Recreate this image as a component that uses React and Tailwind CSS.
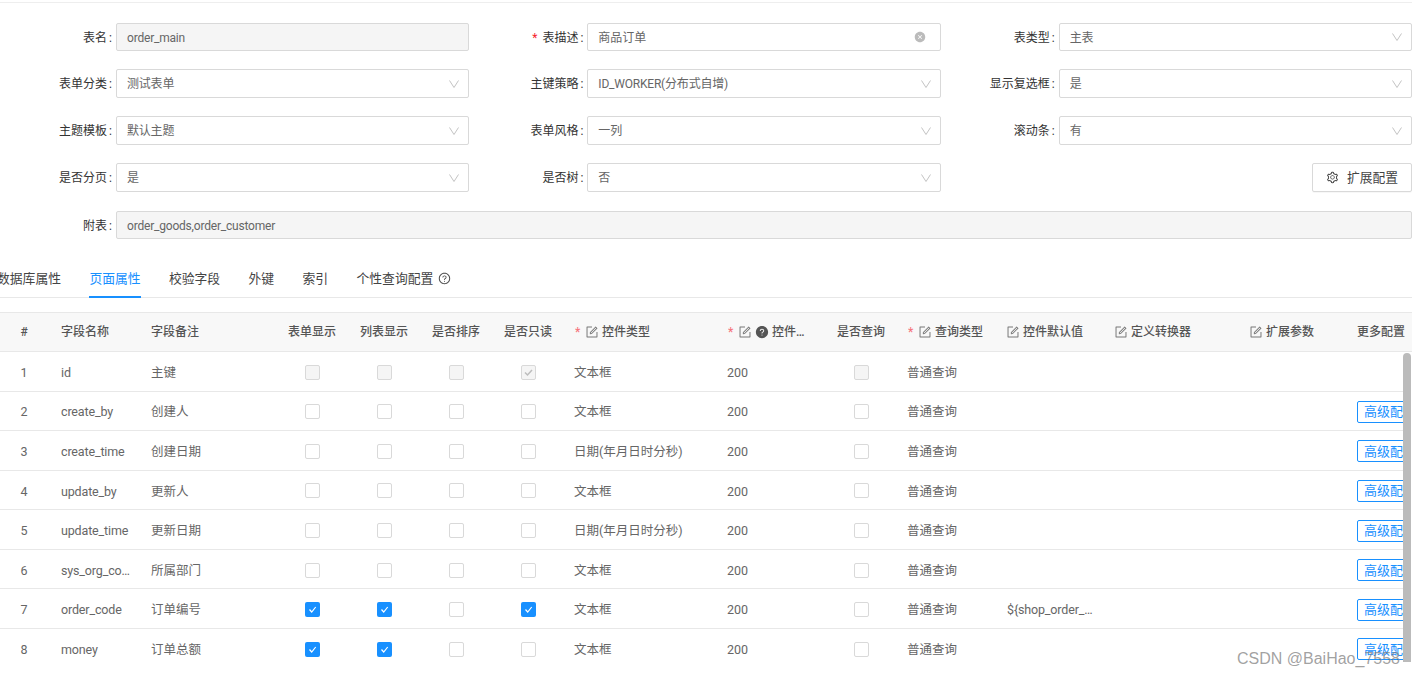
import React from "react";
import { AiOutlineForm, AiFillQuestionCircle, AiOutlineQuestionCircle, AiOutlineSetting, AiFillCloseCircle } from "react-icons/ai";

const Chevron = () => (
  <svg width="12" height="10" viewBox="0 0 12 10" fill="none" stroke="#c4c4c4" strokeWidth="1" className="shrink-0">
    <path d="M1.5 1.5 L6 8.5 L10.5 1.5" />
  </svg>
);

const Field = ({ label, req, h = "h-[29px]", children }) => (
  <div className="flex items-center">
    <div className="w-[116px] shrink-0 pr-[4px] pt-[1px] text-right text-xs text-[#333]">
      {req && <span className="mr-[5px] text-[#f5222d]">*</span>}
      {label}
      <span className="ml-[2px]">:</span>
    </div>
    <div className={`flex-1 ${h}`}>{children}</div>
  </div>
);

const Select = ({ value }) => (
  <div className="flex h-full items-center justify-between rounded-[2px] border border-[#d9d9d9] bg-white pl-[10px] pr-[8px] text-xs text-[#666]">
    <span className="pt-[1px] tracking-[-0.2px]">{value}</span>
    <Chevron />
  </div>
);

const Disabled = ({ value }) => (
  <div className="flex h-full items-center rounded-[2px] border border-[#d9d9d9] bg-[#f5f5f5] pl-[10px] text-xs text-[#666]">
    <span className="pt-[1px] tracking-[-0.2px]">{value}</span>
  </div>
);

const grid =
  "grid grid-cols-[48px_90px_138px_72px_72px_72px_72px_153px_108px_72px_100px_108px_135px_107px_minmax(0,1fr)] items-center";

const Check = ({ state }) => {
  if (state === "on")
    return (
      <span className="flex h-[15px] w-[15px] items-center justify-center rounded-[2px] bg-[#1890ff]">
        <svg width="11" height="11" viewBox="0 0 11 11" fill="none" stroke="#fff" strokeWidth="1.2"><path d="M2.5 5.5 L4.7 8 L8.7 3" /></svg>
      </span>
    );
  if (state === "dis")
    return <span className="block h-[15px] w-[15px] rounded-[2px] border border-[#d9d9d9] bg-[#f5f5f5]" />;
  if (state === "dison")
    return (
      <span className="flex h-[15px] w-[15px] items-center justify-center rounded-[2px] border border-[#d9d9d9] bg-[#f5f5f5]">
        <svg width="11" height="11" viewBox="0 0 11 11" fill="none" stroke="#bdbdbd" strokeWidth="1.5"><path d="M2 5.5 L4.5 8 L9 3" /></svg>
      </span>
    );
  return <span className="block h-[15px] w-[15px] rounded-[2px] border border-[#d9d9d9] bg-white" />;
};

const CheckCell = ({ state }) => (
  <div className="flex justify-center"><Check state={state} /></div>
);

const Star = () => <span className="w-[7px] shrink-0 text-xs leading-none text-[#f5222d] opacity-60">*</span>;
const Edit = () => <AiOutlineForm className="shrink-0 text-[14px] text-[#777]" />;

const rows = [
  { n: 1, name: "id", note: "主键", c: ["dis", "dis", "dis", "dison"], type: "文本框", q: "dis", noBtn: true },
  { n: 2, name: "create_by", note: "创建人", c: ["", "", "", ""], type: "文本框" },
  { n: 3, name: "create_time", note: "创建日期", c: ["", "", "", ""], type: "日期(年月日时分秒)" },
  { n: 4, name: "update_by", note: "更新人", c: ["", "", "", ""], type: "文本框" },
  { n: 5, name: "update_time", note: "更新日期", c: ["", "", "", ""], type: "日期(年月日时分秒)" },
  { n: 6, name: "sys_org_code", note: "所属部门", c: ["", "", "", ""], type: "文本框" },
  { n: 7, name: "order_code", note: "订单编号", c: ["on", "on", "", "on"], type: "文本框", def: "${shop_order_num}" },
  { n: 8, name: "money", note: "订单总额", c: ["on", "on", "", ""], type: "文本框" },
];

const tabs = ["数据库属性", "页面属性", "校验字段", "外键", "索引"];

export default function App() {
  return (
    <div className="relative h-[676px] w-[1417px] overflow-hidden bg-white font-['Roboto','Noto_Sans_CJK_SC',sans-serif]">
      <div className="w-[1412px] pt-[2px]">
        <div className="border-t border-[#eeeeee] pt-[20px]">
          {/* form */}
          <div className="grid grid-cols-3 gap-x-[2px] gap-y-[18px]">
            <Field label="表名" h="h-[28px]"><Disabled value="order_main" /></Field>
            <Field label="表描述" req h="h-[28px]">
              <div className="flex h-full items-center justify-between rounded-[2px] border border-[#d9d9d9] bg-white pl-[10px] pr-[14px] text-xs text-[#666]">
                <span className="pt-[1px]">商品订单</span>
                <AiFillCloseCircle className="text-[12px] text-[#bbbbbb]" />
              </div>
            </Field>
            <Field label="表类型" h="h-[28px]"><Select value="主表" /></Field>
            <Field label="表单分类"><Select value="测试表单" /></Field>
            <Field label="主键策略"><Select value="ID_WORKER(分布式自增)" /></Field>
            <Field label="显示复选框"><Select value="是" /></Field>
            <Field label="主题模板"><Select value="默认主题" /></Field>
            <Field label="表单风格"><Select value="一列" /></Field>
            <Field label="滚动条"><Select value="有" /></Field>
            <Field label="是否分页"><Select value="是" /></Field>
            <Field label="是否树"><Select value="否" /></Field>
            <div className="flex h-[29px] justify-end">
              <button className="flex w-[100px] items-center justify-center gap-[8px] rounded-[2px] border border-[#d9d9d9] bg-white text-[12.75px] text-[#444] shadow-[0_1px_0_rgba(0,0,0,0.03)]">
                <AiOutlineSetting className="text-[13px]" />
                扩展配置
              </button>
            </div>
          </div>
          <div className="mt-[19px] flex items-center">
            <div className="w-[116px] shrink-0 pr-[4px] pt-[1px] text-right text-xs text-[#333]">附表<span className="ml-[2px]">:</span></div>
            <div className="h-[28px] flex-1"><Disabled value="order_goods,order_customer" /></div>
          </div>
        </div>

        {/* tabs */}
        <div className="mt-[22px] flex h-[37px] items-start gap-[28.4px] border-b border-[#e8e8e8] pl-0 text-[12.8px] text-[#444]">
          {tabs.map((t, i) => (
            <div
              key={t}
              className={
                i === 1
                  ? "h-[37px] border-b-2 border-[#1890ff] pt-[8px] text-[#1890ff]"
                  : i === 0
                  ? "-ml-[3px] h-[36px] pt-[8px]"
                  : "h-[36px] pt-[8px]"
              }
            >
              {t}
            </div>
          ))}
          <div className="flex h-[36px] items-start gap-[5px] pt-[8px]">
            个性查询配置
            <AiOutlineQuestionCircle className="mt-[3px] text-[13px]" />
          </div>
        </div>

        {/* table */}
        <div className="mt-[14px]">
          <div className={`${grid} h-[40px] border-y border-[#e8e8e8] bg-[#f8f8f8] text-xs font-medium text-[#555]`}>
            <div className="text-center">#</div>
            <div className="pl-[13px]">字段名称</div>
            <div className="pl-[13px]">字段备注</div>
            <div className="text-center">表单显示</div>
            <div className="text-center">列表显示</div>
            <div className="text-center">是否排序</div>
            <div className="text-center">是否只读</div>
            <div className="flex items-center gap-[3px] pl-[11px]"><Star /><Edit /><span>控件类型</span></div>
            <div className="flex items-center gap-[3px] pl-[11px]">
              <Star /><Edit />
              <AiFillQuestionCircle className="shrink-0 text-[14px] text-[#555]" />
              <span className="w-[34px] truncate">控件长度</span>
            </div>
            <div className="text-center">是否查询</div>
            <div className="flex items-center gap-[3px] pl-[11px]"><Star /><Edit /><span>查询类型</span></div>
            <div className="flex items-center gap-[3px] pl-[9px]"><Edit /><span>控件默认值</span></div>
            <div className="flex items-center gap-[3px] pl-[9px]"><Edit /><span>定义转换器</span></div>
            <div className="flex items-center gap-[3px] pl-[9px]"><Edit /><span>扩展参数</span></div>
            <div className="whitespace-nowrap pl-[10px]">更多配置</div>
          </div>

          <div className="flex h-[310px] overflow-hidden">
            <div className="w-[1403px] overflow-hidden">
              {rows.map((r) => (
                <div key={r.n} className={`${grid} h-[39.57px] border-b border-[#e8e8e8] pt-[2px] text-[12.5px] text-[#666]`}>
                  <div className="pt-[2px] text-center">{r.n}</div>
                  <div className="pl-[13px] pt-[2px]">
                    <span className="block w-[69px] truncate tracking-[-0.15px]">{r.name}</span>
                  </div>
                  <div className="pl-[13px] pt-[2px]">{r.note}</div>
                  <CheckCell state={r.c[0]} />
                  <CheckCell state={r.c[1]} />
                  <CheckCell state={r.c[2]} />
                  <CheckCell state={r.c[3]} />
                  <div className="pl-[10px] pt-[2px]">{r.type}</div>
                  <div className="pl-[10px] pt-[2px]">200</div>
                  <CheckCell state={r.q || ""} />
                  <div className="pl-[10px] pt-[2px]">普通查询</div>
                  <div className="pl-[10px] pt-[2px]">
                    {r.def && <span className="block w-[87px] truncate tracking-[-0.15px]">{r.def}</span>}
                  </div>
                  <div />
                  <div />
                  <div className="overflow-hidden pl-[10px]">
                    {!r.noBtn && (
                      <button className="h-[22px] w-[72px] whitespace-nowrap rounded-[2px] border border-[#1890ff] px-[6px] text-left text-[13px] leading-none text-[#1890ff]">
                        高级配置
                      </button>
                    )}
                  </div>
                </div>
              ))}
            </div>
            <div className="mt-px w-2 rounded-t-[4px] bg-[#bbbbbb]" />
          </div>
        </div>
      </div>
      <div className="absolute left-[1237px] top-[650px] whitespace-nowrap font-['Liberation_Sans',sans-serif] text-[16px] leading-[18px] text-[rgba(120,120,120,0.7)]">
        CSDN @BaiHao_7558
      </div>
    </div>
  );
}
